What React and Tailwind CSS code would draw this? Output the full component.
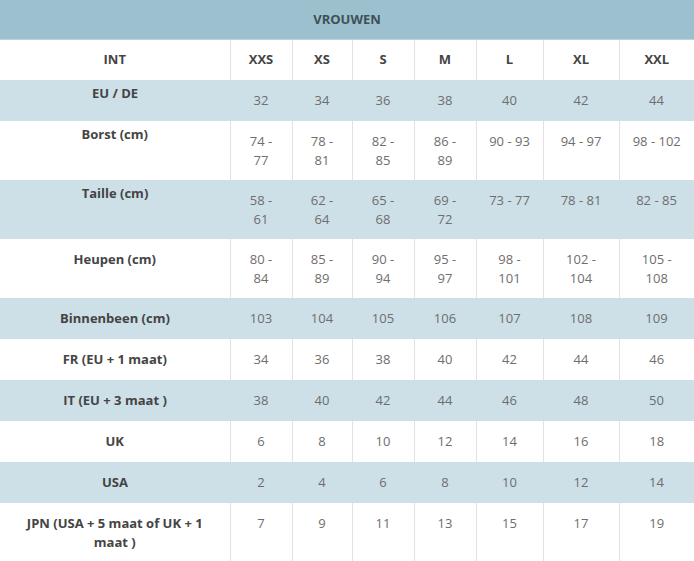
import React from "react";

const sizes = ["XXS", "XS", "S", "M", "L", "XL", "XXL"];

const rows = [
  { label: "EU / DE", values: ["32", "34", "36", "38", "40", "42", "44"], h: "h-[41px]", high: true },
  { label: "Borst (cm)", values: ["74 - 77", "78 - 81", "82 - 85", "86 - 89", "90 - 93", "94 - 97", "98 - 102"], h: "h-[59px]", high: true },
  { label: "Taille (cm)", values: ["58 - 61", "62 - 64", "65 - 68", "69 - 72", "73 - 77", "78 - 81", "82 - 85"], h: "h-[59px]", high: true },
  { label: "Heupen (cm)", values: ["80 - 84", "85 - 89", "90 - 94", "95 - 97", "98 - 101", "102 - 104", "105 - 108"], h: "h-[59px]" },
  { label: "Binnenbeen (cm)", values: ["103", "104", "105", "106", "107", "108", "109"], h: "h-[41px]" },
  { label: "FR (EU + 1 maat)", values: ["34", "36", "38", "40", "42", "44", "46"], h: "h-[41px]" },
  { label: "IT (EU + 3 maat )", values: ["38", "40", "42", "44", "46", "48", "50"], h: "h-[41px]" },
  { label: "UK", values: ["6", "8", "10", "12", "14", "16", "18"], h: "h-[41px]" },
  { label: "USA", values: ["2", "4", "6", "8", "10", "12", "14"], h: "h-[41px]" },
  { label: "JPN (USA + 5 maat of UK + 1 maat )", values: ["7", "9", "11", "13", "15", "17", "19"], h: "h-[58px]" },
];

export default function App() {
  return (
    <div className="w-[694px] h-[561px] overflow-hidden bg-white font-['Open_Sans',sans-serif] text-[13px] leading-[19px]">
      <table className="w-full table-fixed border-collapse">
        <colgroup>
          <col className="w-[230px]" />
          <col className="w-[62px]" />
          <col className="w-[60px]" />
          <col className="w-[62px]" />
          <col className="w-[62px]" />
          <col className="w-[67px]" />
          <col className="w-[76px]" />
          <col className="w-[75px]" />
        </colgroup>
        <thead>
          <tr className="h-[39px] bg-[#9dc0cf]">
            <th colSpan={8} className="p-0 align-middle font-bold text-[#3f5058] border-b border-[#b9d2dc]">
              VROUWEN
            </th>
          </tr>
          <tr className="h-[41px] bg-white">
            <th className="px-3 align-middle font-bold text-[#444] border-r border-[#e2e2e2]">INT</th>
            {sizes.map((s, i) => (
              <th
                key={s}
                className={`px-3 align-middle font-bold text-[#444] ${i < 6 ? "border-r border-[#e2e2e2]" : ""}`}
              >
                {s}
              </th>
            ))}
          </tr>
        </thead>
        <tbody>
          {rows.map((r, ri) => {
            const striped = ri % 2 === 0;
            const border = striped ? "" : "border-r border-[#e2e2e2]";
            return (
              <tr key={r.label} className={`${r.h} ${striped ? "bg-[#cddfe7]" : "bg-white"}`}>
                <th
                  className={`px-5 align-top font-bold text-[#444] ${r.high ? "pt-[4px]" : "pt-[11px]"} ${border}`}
                >
                  {r.label}
                </th>
                {r.values.map((v, i) => (
                  <td
                    key={i}
                    className={`px-3 pt-[11px] align-top text-center text-[#6e6e6e] ${i < 6 ? border : ""}`}
                  >
                    {v}
                  </td>
                ))}
              </tr>
            );
          })}
        </tbody>
      </table>
    </div>
  );
}
